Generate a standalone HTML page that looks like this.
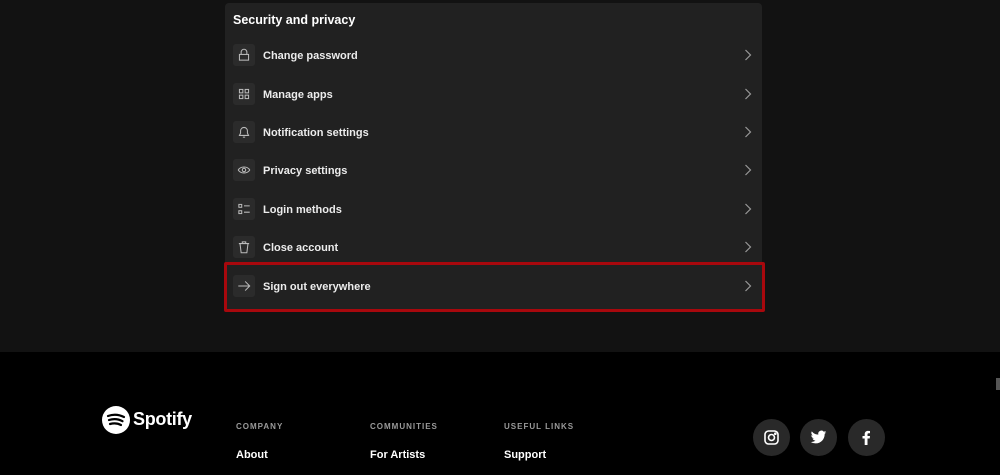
<!DOCTYPE html>
<html><head><style>
*{margin:0;padding:0;box-sizing:border-box}
body{width:1000px;height:475px;background:#121212;font-family:"Liberation Sans",sans-serif;position:relative;overflow:hidden;color:#fff}
.card{position:absolute;left:225px;top:3px;width:537px;height:308px;background:#212121;border-radius:4px}
.title{position:absolute;left:8px;top:10px;font-size:12.5px;font-weight:bold}
.row{position:absolute;left:0;width:537px;height:38px}
.ic{position:absolute;left:8px;top:8px;width:22px;height:22px;background:#2b2b2b;border-radius:3px}
.ic svg{position:absolute;left:3px;top:3px}
.lbl{position:absolute;left:38px;top:14px;font-size:11px;font-weight:bold;color:#ececec}
.chev{position:absolute;right:10px;top:13px}
.red{position:absolute;left:224px;top:262px;width:541px;height:50px;border:3px solid #a8080d;border-radius:2px}
.foot{position:absolute;left:0;top:352px;width:1000px;height:123px;background:#000}
.h{position:absolute;top:70px;font-size:8px;font-weight:bold;letter-spacing:1px;color:#9a9a9a}
.l{position:absolute;top:97px;font-size:11px;font-weight:bold}
.soc{position:absolute;top:67px;width:37px;height:37px;border-radius:50%;background:#292929}
.soc svg{position:absolute;left:10px;top:10px}
</style></head><body>
<div class="card">
<div class="title">Security and privacy</div>
<div class="row" style="top:33px"><div class="ic"><svg width="16" height="16" viewBox="0 0 14 14" fill="none" stroke="#bbb" stroke-width="0.9"><rect x="3" y="6.5" width="8" height="5"/><path d="M4.5 6.5V4.5a2.5 2.5 0 0 1 5 0v2"/></svg></div><div class="lbl">Change password</div><svg class="chev" width="8" height="12" viewBox="0 0 8 12"><path d="M1.5 1l5 5-5 5" stroke="#999" fill="none" stroke-width="1.2"/></svg></div>
<div class="row" style="top:72px"><div class="ic"><svg width="16" height="16" viewBox="0 0 14 14" fill="none" stroke="#bbb" stroke-width="0.9"><rect x="3" y="3" width="3" height="3"/><rect x="8" y="3" width="3" height="3"/><rect x="3" y="8" width="3" height="3"/><rect x="8" y="8" width="3" height="3"/></svg></div><div class="lbl">Manage apps</div><svg class="chev" width="8" height="12" viewBox="0 0 8 12"><path d="M1.5 1l5 5-5 5" stroke="#999" fill="none" stroke-width="1.2"/></svg></div>
<div class="row" style="top:110px"><div class="ic"><svg width="16" height="16" viewBox="0 0 14 14" fill="none" stroke="#bbb" stroke-width="0.9"><path d="M3 10h8l-1-2V6a3 3 0 0 0-6 0v2z M6 11.5h2"/></svg></div><div class="lbl">Notification settings</div><svg class="chev" width="8" height="12" viewBox="0 0 8 12"><path d="M1.5 1l5 5-5 5" stroke="#999" fill="none" stroke-width="1.2"/></svg></div>
<div class="row" style="top:148px"><div class="ic"><svg width="16" height="16" viewBox="0 0 14 14" fill="none" stroke="#bbb" stroke-width="0.9"><path d="M2 7c2-3.5 8-3.5 10 0c-2 3.5-8 3.5-10 0z"/><circle cx="7" cy="7" r="1.5"/></svg></div><div class="lbl">Privacy settings</div><svg class="chev" width="8" height="12" viewBox="0 0 8 12"><path d="M1.5 1l5 5-5 5" stroke="#999" fill="none" stroke-width="1.2"/></svg></div>
<div class="row" style="top:187px"><div class="ic"><svg width="16" height="16" viewBox="0 0 14 14" fill="none" stroke="#bbb" stroke-width="0.9"><rect x="2.5" y="3" width="2.5" height="2.5"/><rect x="2.5" y="8.5" width="2.5" height="2.5"/><path d="M7 4.3h5M7 9.8h5"/></svg></div><div class="lbl">Login methods</div><svg class="chev" width="8" height="12" viewBox="0 0 8 12"><path d="M1.5 1l5 5-5 5" stroke="#999" fill="none" stroke-width="1.2"/></svg></div>
<div class="row" style="top:225px"><div class="ic"><svg width="16" height="16" viewBox="0 0 14 14" fill="none" stroke="#bbb" stroke-width="0.9"><path d="M2.5 4h9M5.5 4V2.5h3V4M3.5 4l1 8h5l1-8"/></svg></div><div class="lbl">Close account</div><svg class="chev" width="8" height="12" viewBox="0 0 8 12"><path d="M1.5 1l5 5-5 5" stroke="#999" fill="none" stroke-width="1.2"/></svg></div>
<div class="row" style="top:264px"><div class="ic"><svg width="16" height="16" viewBox="0 0 14 14" fill="none" stroke="#bbb" stroke-width="0.9"><path d="M2 7h10M8 3l4 4-4 4"/></svg></div><div class="lbl">Sign out everywhere</div><svg class="chev" width="8" height="12" viewBox="0 0 8 12"><path d="M1.5 1l5 5-5 5" stroke="#999" fill="none" stroke-width="1.2"/></svg></div>
</div>
<div class="red"></div>
<div class="foot">
<svg style="position:absolute;left:102px;top:54px" width="28" height="28" viewBox="0 0 28 28"><circle cx="14" cy="14" r="14" fill="#fff"/><path d="M6 10c5-1.8 11-1.5 16 1M7 14c4.5-1.4 9.5-1 13.5 1.2M8 18c3.8-1 7.8-.7 11 1" stroke="#000" stroke-width="2.2" fill="none" stroke-linecap="round"/></svg>
<div style="position:absolute;left:133px;top:57px;font-size:18px;font-weight:bold;letter-spacing:-0.3px">Spotify</div>
<div class="h" style="left:236px">COMPANY</div>
<div class="h" style="left:370px">COMMUNITIES</div>
<div class="h" style="left:504px">USEFUL LINKS</div>
<div class="l" style="left:236px">About</div>
<div class="l" style="left:370px">For Artists</div>
<div class="l" style="left:504px">Support</div>
<div class="soc" style="left:753px"><svg width="17" height="17" viewBox="0 0 17 17" fill="none" stroke="#fff" stroke-width="1.6"><rect x="2" y="2" width="13" height="13" rx="3.5"/><circle cx="8.5" cy="8.5" r="3"/><circle cx="12.3" cy="4.7" r=".5" fill="#fff"/></svg></div>
<div class="soc" style="left:800px"><svg width="17" height="17" viewBox="0 0 24 24"><path fill="#fff" d="M23 4.5a9 9 0 0 1-2.6.7 4.5 4.5 0 0 0 2-2.5 9 9 0 0 1-2.9 1.1A4.5 4.5 0 0 0 11.8 8 12.8 12.8 0 0 1 2.5 3.300a4.5 4.5 0 0 0 1.4 6 4.5 4.5 0 0 1-2-.6 4.5 4.5 0 0 0 3.6 4.5 4.5 4.5 0 0 1-2 .1 4.5 4.5 0 0 0 4.2 3.1A9 9 0 0 1 1 18.3 12.8 12.8 0 0 0 7.9 20.3c8.3 0 12.8-6.9 12.8-12.8v-.6A9 9 0 0 0 23 4.5z"/></svg></div>
<div class="soc" style="left:848px"><svg width="17" height="17" viewBox="0 0 17 17"><path fill="#fff" d="M9.5 16V9.5h2.2l.3-2.5H9.5V5.4c0-.7.2-1.2 1.2-1.2H12V2a17 17 0 0 0-2-.1c-2 0-3.3 1.2-3.3 3.4V7H4.5v2.5h2.2V16z"/></svg></div>
<div style="position:absolute;left:996px;top:26px;width:4px;height:12px;background:#555"></div>
</div>
</body></html>
